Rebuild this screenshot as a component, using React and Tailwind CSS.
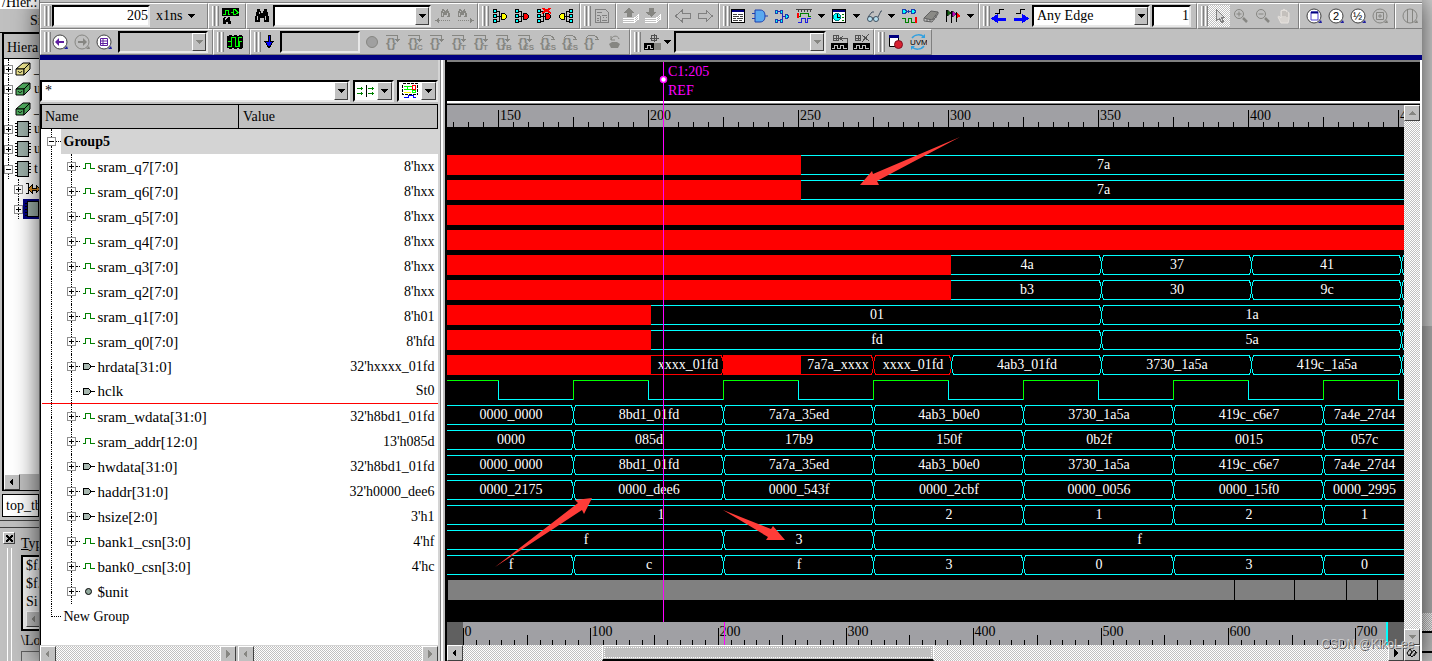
import React from "react";

const RAISED = "bg-[#c0c0c0] border border-t-white border-l-white border-r-[#404040] border-b-[#404040]";
const SUNKEN = "border-2 border-t-black border-l-black border-r-[#e8e8e8] border-b-[#e8e8e8]";
const CHECKER = "bg-[conic-gradient(#fff_25%,#c0c0c0_0_50%,#fff_0_75%,#c0c0c0_0)] bg-[length:2px_2px]";

const CYAN = "#00ffff";
const RED = "#ff0000";

// visible part of the simulation, in ns, and the zoom of the wave view
const T_START = 133;
const T_END = 452;
const PX_PER_NS = 3;
const toX = (t) => (t - T_START) * PX_PER_NS;

// [from, to, label, kind]
const clocked = (labels) =>
  labels.map((label, i) => [i === 0 ? 100 : 125 + i * 50, 175 + i * 50, label]);

const qBus = (unknownUntil, parts) => [[100, unknownUntil, "", "x"], ...parts];

const signals = [
  { name: "sram_q7[7:0]", value: "8'hxx", icon: "net", bus: qBus(251, [[251, 500, "7a", "open"]]) },
  { name: "sram_q6[7:0]", value: "8'hxx", icon: "net", bus: qBus(251, [[251, 500, "7a", "open"]]) },
  { name: "sram_q5[7:0]", value: "8'hxx", icon: "net", bus: qBus(500, []) },
  { name: "sram_q4[7:0]", value: "8'hxx", icon: "net", bus: qBus(500, []) },
  { name: "sram_q3[7:0]", value: "8'hxx", icon: "net", bus: qBus(301, [[301, 351, "4a", "open"], [351, 401, "37"], [401, 451, "41"], [451, 500, ""]]) },
  { name: "sram_q2[7:0]", value: "8'hxx", icon: "net", bus: qBus(301, [[301, 351, "b3", "open"], [351, 401, "30"], [401, 451, "9c"], [451, 500, ""]]) },
  { name: "sram_q1[7:0]", value: "8'h01", icon: "net", bus: qBus(201, [[201, 351, "01", "open"], [351, 451, "1a"], [451, 500, ""]]) },
  { name: "sram_q0[7:0]", value: "8'hfd", icon: "net", bus: qBus(201, [[201, 351, "fd", "open"], [351, 451, "5a"], [451, 500, ""]]) },
  {
    name: "hrdata[31:0]",
    value: "32'hxxxx_01fd",
    icon: "port",
    bus: [
      [100, 201, "", "x"],
      [201, 225, "xxxx_01fd", "partial-open"],
      [225, 251, "", "x"],
      [251, 275, "7a7a_xxxx", "partial-open"],
      [275, 301, "xxxx_01fd", "partial"],
      [301, 351, "4ab3_01fd"],
      [351, 401, "3730_1a5a"],
      [401, 451, "419c_1a5a"],
      [451, 500, ""],
    ],
  },
  { name: "hclk", value: "St0", icon: "port", clock: true },
  { name: "sram_wdata[31:0]", value: "32'h8bd1_01fd", icon: "net", bus: clocked(["0000_0000", "8bd1_01fd", "7a7a_35ed", "4ab3_b0e0", "3730_1a5a", "419c_c6e7", "7a4e_27d4"]) },
  { name: "sram_addr[12:0]", value: "13'h085d", icon: "net", bus: clocked(["0000", "085d", "17b9", "150f", "0b2f", "0015", "057c"]) },
  { name: "hwdata[31:0]", value: "32'h8bd1_01fd", icon: "port", bus: clocked(["0000_0000", "8bd1_01fd", "7a7a_35ed", "4ab3_b0e0", "3730_1a5a", "419c_c6e7", "7a4e_27d4"]) },
  { name: "haddr[31:0]", value: "32'h0000_dee6", icon: "port", bus: clocked(["0000_2175", "0000_dee6", "0000_543f", "0000_2cbf", "0000_0056", "0000_15f0", "0000_2995"]) },
  { name: "hsize[2:0]", value: "3'h1", icon: "port", bus: [[100, 275, "1"], [275, 325, "2"], [325, 375, "1"], [375, 425, "2"], [425, 500, "1"]] },
  { name: "bank1_csn[3:0]", value: "4'hf", icon: "net", bus: [[100, 225, "f"], [225, 275, "3"], [275, 500, "f"]] },
  { name: "bank0_csn[3:0]", value: "4'hc", icon: "net", bus: clocked(["f", "c", "f", "3", "0", "3", "0"]) },
  { name: "$unit", value: "", icon: "unit", unit: true },
];

/* ---------- icons ---------- */

function Svg({ w = 16, h = 16, children, smooth }) {
  return (
    <svg width={w} height={h} viewBox={`0 0 ${w} ${h}`} shapeRendering={smooth ? "auto" : "crispEdges"} className="shrink-0" aria-hidden="true">
      {children}
    </svg>
  );
}

const Down = ({ color = "#000" }) => (
  <Svg w={7} h={4}><path d="M0 0h7L3.5 4z" fill={color} /></Svg>
);

const Binoculars = ({ color = "#000", s = 1 }) => (
  <g fill={color} transform={`scale(${s})`}>
    <path d="M3 1h3v2h1v2h2V3h1V1h3v3h1v4h1v6h-5v-4H6v4H1V8h1V4h1z" />
    <path d="M3 8h1v4H3zM11 8h1v4h-1zM5 4h1v2H5z" fill="#c0c0c0" />
  </g>
);

const FindNext = ({ right }) => (
  <Svg w={17} h={16}>
    <g transform={right ? "translate(0 0)" : "translate(5 0)"}><Binoculars color="#868682" s={0.65} /></g>
    <path d={right ? "M13 10v5l4-2.500z" : "M4 10v5l-4-2.500z"} fill="#868682" />
    <path d={right ? "M1 12.500h12" : "M4 12.500h12"} stroke="#868682" strokeDasharray="1 1" />
  </Svg>
);

const FindWave = () => (
  <Svg w={17} h={17}>
    <path d="M0 0h17v8H0z" fill="#000" />
    <path d="M1 6.500h2v-4h3v4h2M9 4.500h2M11 1.500h2l2 2v2l-2 1h-2zM15 4.500h2" stroke="#00ff00" fill="none" />
    <g transform="translate(0 8)"><Binoculars s={0.6} /></g>
  </Svg>
);

const Tracer = ({ gate, flip, crossed }) => (
  <Svg>
    <g transform={flip ? "translate(16 0) scale(-1 1)" : ""}>
      <path d="M1.500 1.500h3v3h-3zM1.500 6.500h3v3h-3zM1.500 11.500h3v3h-3z" fill={CYAN} stroke="#000" />
      <path d="M2 2h2v2h-2zM2 7h2v2h-2zM2 12h2v2h-2z" fill={CYAN} />
      <path d="M5 3.500h2.500v10H5M5 8.500h6" stroke="#000" fill="none" />
      <path d="M9.500 5.500h3l2 2v2l-2 2h-3z" fill={gate} stroke="#000" />
    </g>
    {crossed && <path d="M6 0l9 5M15 0L6 5" stroke={RED} strokeWidth="2" />}
  </Svg>
);

const Doc = () => (
  <Svg>
    <path d="M1.500 1.500h10l3 3v10h-13z" fill="none" stroke="#808080" />
    <path d="M3 4.500h5M3 7.500h3M8 7.500h5M3 10.500h2M3 12.500h2M9 9.500h1M12 9.500h1M8 12.500h5M6.500 8v6" stroke="#808080" />
  </Svg>
);

const Stack = ({ up }) => (
  <Svg w={18}>
    <path d={up ? "M7 0l6 5h-3v4H5V5H1z" : "M5 0h5v4h3L7.500 9 1 4h4z"} fill="#868682" />
    <path d="M1 10.500h11l5-4M1 12.500h11l5-4M1 14.500h11l5-4" stroke="#fff" fill="none" />
  </Svg>
);

const HollowArrow = ({ left }) => (
  <Svg>
    <path transform={left ? "" : "translate(16 0) scale(-1 1)"} d="M.5 8L7 2.500v3h8v5H7v3z" fill="none" stroke="#808080" />
  </Svg>
);

const ListWindow = () => (
  <Svg>
    <path d="M1.500 1.500h13v13h-13z" fill="#fff" stroke="#000" />
    <path d="M2 2h12v2H2z" fill="#000080" />
    <path d="M3 6.500h4M8 6.500h5M3 8.500h6M10 8.500h3M3 10.500h3M7 10.500h6M3 12.500h5M9 12.500h3" stroke="#404040" />
  </Svg>
);

const Gate = () => (
  <Svg smooth>
    <path d="M3 2h5c4 0 5 3 5 6s-1 6-5 6H3z" fill="#5aa9f0" stroke="#1b3fae" />
    <path d="M0 5.500h3M0 10.500h3M13 8h3" stroke="#1b3fae" />
  </Svg>
);

const Nets = () => (
  <Svg>
    <path d="M3 3.500h5M3 12.500h5M8.500 3v10M8 8.500h3" stroke="#2020c0" fill="none" />
    <path d="M1.500 2.500h2v3h-2zM1.500 11.500h2v3h-2zM6.500 2h2v3h-2zM6.500 11h2v3h-2zM11.500 6.500h2l1 2-1 2h-2z" fill={CYAN} stroke="#1b3fae" />
  </Svg>
);

const WaveRuler = () => (
  <Svg>
    <path d="M0 1.500h16M2.500 1v3M5.500 1v3M8.500 1v3M11.500 1v3M14.500 1v3" stroke="#404040" />
    <path d="M2 8.500h2v-3h8v3h3" stroke="#008000" fill="none" />
    <path d="M2 14.500h3v-4h4v4h2v-4h4" stroke="#2020e0" fill="none" />
    <path d="M1 5h2v5H1z" fill={RED} />
  </Svg>
);

const ClockWindow = () => (
  <Svg>
    <path d="M1.500 1.500h13v13h-13z" fill="#fff" stroke="#000" />
    <path d="M2 2h12v2H2z" fill="#000080" />
    <circle cx="6" cy="9" r="3.500" fill={CYAN} stroke="#008080" />
    <path d="M6.500 6v3.500H9" stroke="#000" fill="none" />
    <path d="M11 6.500h2M11 9.500h2M11 12.500h2" stroke="#008000" />
  </Svg>
);

const Glasses = () => (
  <Svg smooth>
    <circle cx="4" cy="11" r="2.500" fill="#b8e0f0" stroke="#405060" />
    <circle cx="10" cy="11" r="2.500" fill="#b8e0f0" stroke="#405060" />
    <path d="M2 9l4-5h2M12 9l3-6h1M6 10h2" stroke="#405060" fill="none" />
  </Svg>
);

const GateWave = () => (
  <Svg>
    <path d="M1.500 1.500h3l1 2-1 2h-3zM10.500 1.500h3l1 2-1 2h-3z" fill={CYAN} stroke="#1b3fae" />
    <path d="M6 3.500h4M7.500 2v3" stroke="#1b3fae" />
    <path d="M1 10.500h3v4h3v-4h3v4h4" stroke="#008000" fill="none" />
    <path d="M14 9h2v6h-2z" fill={RED} />
  </Svg>
);

const GreyChip = () => (
  <Svg smooth>
    <path d="M1 10l7-7 7 1-6 8z" fill="#8a8a86" stroke="#606060" />
    <path d="M1 10v3l8 1 6-8V4M4 11v3M7 11v3M11 10v2M13 7v3" stroke="#606060" fill="none" />
  </Svg>
);

const Flags = () => (
  <Svg>
    <path d="M1.500 2v12M6.500 3v12M11.500 4v10" stroke="#000" />
    <path d="M2 2l5 3-5 3z" fill="#106010" stroke="#000" strokeWidth=".5" />
    <path d="M7 3l5 3-5 3z" fill="#c000c0" stroke="#000" strokeWidth=".5" />
    <path d="M12 5l4 3-4 2z" fill={RED} />
  </Svg>
);

const EdgeArrow = ({ left }) => (
  <Svg>
    <path d={left ? "M4 5.500h4v-4h5" : "M3 5.500h4v-4h5"} stroke="#000" fill="none" />
    <path transform={left ? "" : "translate(16 0) scale(-1 1)"} d="M0 10.500l7-5v4h8v3H7v3z" fill="#0000ff" />
  </Svg>
);

const Pointer = () => (
  <Svg><path d="M5.500 1.500v11l3-2 2 4 2-1-2-4h3z" fill="#d8d8d8" stroke="#808080" /></Svg>
);

const Magnifier = ({ plus }) => (
  <Svg smooth>
    <circle cx="6" cy="6" r="4.500" fill="none" stroke="#868682" />
    <path d={plus ? "M3.500 6h5M6 3.500v5" : "M3.500 6h5"} stroke="#868682" />
    <path d="M10 10l4 4" stroke="#868682" strokeWidth="2.500" />
  </Svg>
);

const Hand = () => (
  <Svg smooth>
    <path d="M4 15L1 9c0-1 1-1 2 0l1 1V3c0-1 2-1 2 0V2c0-1 2-1 2 0v1c0-1 2-1 2 0v2c0-1 2-1 2 0v6l-1 4z" fill="#d8d4d0" stroke="#e6e2de" />
    <path d="M6 3v5M8 3v5M10 4v5" stroke="#b0aca8" />
  </Svg>
);

function Lens({ children, off }) {
  return (
    <Svg w={17} smooth>
      <circle cx="8" cy="8" r="7" fill={off ? "#c0c0c0" : "#fff"} stroke={off ? "#868682" : "#404040"} />
      <path d="M12 15l4 0-1-3z" fill={off ? "#868682" : "#2020a0"} />
      {children}
    </Svg>
  );
}

const Brackets = ({ tag = "", loop }) => (
  <Svg w={18}>
    {loop ? (
      <path d="M3 4c3-4 9-4 11 0v2M12 5h4M14.500 3v3" stroke="#868682" fill="none" />
    ) : (
      <path d="M1 1.500h11v6M10 5.500h5M11 6.500h3" stroke="#868682" fill="none" />
    )}
    <text x="1" y="13" fontSize="13" fontWeight="bold" fill="#868682" className="font-['Liberation_Sans']">{"{}"}</text>
    {tag && <text x={tag.length > 1 ? 6 : 10} y="16" fontSize="8" fontWeight="bold" fill="#868682" className="font-['Liberation_Sans']">{tag}</text>}
  </Svg>
);

const ScopeWave = ({ kind }) => (
  <Svg w={17} h={17}>
    <path d="M0 9h17v7H0z" fill={kind === "pick" ? "#868682" : "#000"} />
    {kind === "pick" && <path d="M0 9h10v7H0z" fill="#000" />}
    <path d={kind === "pick" ? "M1 14.500h2v-3h3v3h3" : "M1 14.500h2v-3h3v3h3v-3h3v3h4"} stroke="#c0c0c0" fill="none" />
    <circle cx={kind === "pick" ? 10 : 5} cy="4" r="3" fill="none" stroke="#505050" />
    <path d={kind === "pick" ? "M10.500 0v8M6 4.500h9" : "M5.500 1v6M2 4.500h6"} stroke="#505050" />
    {kind === "back" && <path d="M9 4.500h7v4M12 2l-3 2.500 3 2.500" stroke="#505050" fill="none" />}
    {kind === "cut" && <path d="M9 1l7 6M16 0L9 8" stroke="#505050" />}
  </Svg>
);

const GreenWaves = () => (
  <Svg>
    <path d="M0 1h16v14H0z" fill="#000" />
    <path d="M1 7.500h3v-4h4v9h3v-9h4M1 12.500h3v-5M11 7.500h4M12.500 8v5" stroke="#00ff00" fill="none" />
    <path d="M0 1.500h16M0 14.500h16" stroke="#c0c0c0" strokeDasharray="2 3" />
  </Svg>
);

const RecordWindow = () => (
  <Svg smooth>
    <path d="M1.500 1.500h9v11h-9z" fill="#fff" stroke="#000" />
    <path d="M1 1h10v3H1z" fill="#000080" />
    <circle cx="10.500" cy="10.500" r="4" fill="#d82030" stroke="#801020" />
  </Svg>
);

const Uvm = () => (
  <Svg w={18} smooth>
    <path d="M3 4c3-4 9-4 12-1M15 12c-3 4-9 4-12 1" stroke="#30a0e0" fill="none" strokeWidth="1.500" />
    <path d="M16 0v4h-4zM2 16v-4h4z" fill="#30a0e0" />
    <text x="1" y="11" fontSize="8" fill="#000" className="font-['Liberation_Sans']">UVM</text>
  </Svg>
);

function SignalIcon({ kind }) {
  if (kind === "net") {
    return <Svg w={12} h={9}><path d="M0 6.500h2.500v-5h5v5h4.500" stroke="#008000" fill="none" /></Svg>;
  }
  if (kind === "port") {
    return <Svg w={12} h={9}><path d="M.5 1.500h5l2 2v2l-2 2h-5z" fill="#a8b8b0" stroke="#000" /><path d="M8 4.500h4" stroke="#000" /></Svg>;
  }
  return <Svg w={12} h={9} smooth><circle cx="5.500" cy="4.500" r="3" fill="#90a89c" stroke="#000" /></Svg>;
}

const CubeIcon = ({ color }) => (
  <Svg smooth>
    <path d="M1 8l7-6h7l-6 6z" fill={color} stroke="#000" />
    <path d="M1 8h8v6H1z" fill={color} stroke="#000" />
    <path d="M9 8l6-6v6l-6 6z" fill={color} stroke="#000" />
    <path d="M3 10c1 2 3 2 4 0" stroke="#000" fill="none" />
  </Svg>
);

const ChipIcon = () => (
  <Svg>
    <path d="M2.500.5h11v15h-11z" fill="#9cafa8" stroke="#000" />
    <path d="M0 2.500h2M0 5.500h2M0 8.500h2M0 11.500h2M0 14.500h2M14 2.500h2M14 5.500h2M14 8.500h2M14 11.500h2" stroke="#000" />
  </Svg>
);

/* ---------- small controls ---------- */

function ToolButton({ label, children, pressed, narrow }) {
  return (
    <button
      type="button"
      aria-label={label}
      className={`flex h-[22px] shrink-0 items-center justify-center ${narrow ? "w-[13px]" : "w-[22px]"} ${pressed ? CHECKER : ""}`}
    >
      {children}
    </button>
  );
}

const Grip = () => (
  <div className="ml-[3px] flex h-[20px] shrink-0 gap-px">
    <div className="w-[3px] border-r border-l border-r-[#808080] border-l-white" />
    <div className="w-[3px] border-r border-l border-r-[#808080] border-l-white" />
  </div>
);

const Group = ({ width, children }) => (
  <div className={`flex h-[26px] shrink-0 items-center overflow-hidden border-t border-r border-b border-l border-t-white border-r-[#808080] border-b-[#808080] border-l-white ${width}`}>
    {children}
  </div>
);

function Combo({ label, width, value = "", disabled }) {
  return (
    <div className={`flex h-[22px] shrink-0 ${SUNKEN} ${width} ${disabled ? "bg-[#c0c0c0]" : "bg-white"}`}>
      <input aria-label={label} defaultValue={value} disabled={disabled} className="min-w-0 flex-1 bg-transparent px-1 text-sm outline-none" />
      <button type="button" aria-label={`${label} list`} className={`flex w-[14px] shrink-0 items-center justify-center ${RAISED}`}>
        <Down color={disabled ? "#868682" : "#000"} />
      </button>
    </div>
  );
}

function ScrollButton({ label, dir, off }) {
  const paths = { left: "M5 0v8L1 4z", right: "M2 0v8l4-4z", up: "M0 6h8L4 2z", down: "M0 2h8L4 6z" };
  return (
    <button type="button" aria-label={label} className={`flex size-[16px] shrink-0 items-center justify-center ${RAISED}`}>
      <Svg w={8} h={8}><path d={paths[dir]} fill={off ? "#868682" : "#000"} /></Svg>
    </button>
  );
}

/* ---------- toolbars ---------- */

function Toolbars() {
  return (
    <header className="shrink-0 overflow-hidden">
      <div className="h-[3px] border-b border-[#808080]" />
      <div className="flex">
        <Group width="w-[168px]">
          <Grip />
          <input aria-label="Time" defaultValue="205" className={`ml-px h-[22px] w-[98px] bg-white text-right text-sm outline-none ${SUNKEN}`} />
          <button type="button" className="ml-[6px] flex items-center gap-[6px] text-sm">x1ns <Down /></button>
        </Group>
        <Group width="w-[38px]">
          <Grip />
          <ToolButton label="Find signal"><FindWave /></ToolButton>
        </Group>
        <Group width="w-[232px]">
          <div className="ml-[4px]"><ToolButton label="Find"><Svg><Binoculars /></Svg></ToolButton></div>
          <Combo label="Search text" width="w-[158px]" />
          <div className="ml-px flex">
            <ToolButton label="Find previous"><FindNext /></ToolButton>
            <ToolButton label="Find next"><FindNext right /></ToolButton>
          </div>
        </Group>
        <Group width="w-[102px]">
          <Grip />
          <ToolButton label="Trace drivers"><Tracer gate="#ffff00" /></ToolButton>
          <ToolButton label="Trace active driver"><Tracer gate={RED} /></ToolButton>
          <ToolButton label="Trace X"><Tracer gate={RED} crossed /></ToolButton>
          <ToolButton label="Trace loads"><Tracer gate="#ffff00" flip /></ToolButton>
        </Group>
        <Group width="w-[36px]">
          <Grip />
          <ToolButton label="Source"><Doc /></ToolButton>
        </Group>
        <Group width="w-[52px]">
          <div className="ml-[3px] flex">
            <ToolButton label="Scope up"><Stack up /></ToolButton>
            <ToolButton label="Scope down"><Stack /></ToolButton>
          </div>
        </Group>
        <Group width="w-[51px]">
          <div className="ml-[3px] flex">
            <ToolButton label="Back"><HollowArrow left /></ToolButton>
            <ToolButton label="Forward"><HollowArrow /></ToolButton>
          </div>
        </Group>
        <Group width="w-[260px]">
          <Grip />
          <div className="-ml-[3px] flex">
            <ToolButton label="Source view"><ListWindow /></ToolButton>
            <ToolButton label="Schematic view"><Gate /></ToolButton>
            <ToolButton label="Path schematic"><Nets /></ToolButton>
            <ToolButton label="Wave view"><WaveRuler /></ToolButton>
            <ToolButton label="Wave view menu" narrow><Down /></ToolButton>
            <ToolButton label="List view"><ClockWindow /></ToolButton>
            <ToolButton label="List view menu" narrow><Down /></ToolButton>
            <ToolButton label="Watch"><Glasses /></ToolButton>
            <ToolButton label="Watch menu" narrow><Down /></ToolButton>
            <ToolButton label="Annotate"><GateWave /></ToolButton>
            <ToolButton label="Memory"><GreyChip /></ToolButton>
            <ToolButton label="Markers"><Flags /></ToolButton>
            <ToolButton label="Markers menu" narrow><Down /></ToolButton>
          </div>
        </Group>
        <Group width="w-[218px]">
          <Grip />
          <div className="-ml-[2px] flex">
            <ToolButton label="Previous edge"><EdgeArrow left /></ToolButton>
            <ToolButton label="Next edge"><EdgeArrow /></ToolButton>
          </div>
          <div className={`flex h-[22px] w-[118px] shrink-0 bg-white ${SUNKEN}`}>
            <select aria-label="Edge type" className="min-w-0 flex-1 appearance-none bg-white pl-[3px] text-sm leading-none outline-none">
              <option>Any Edge</option>
            </select>
            <div className={`flex w-[14px] items-center justify-center ${RAISED}`}><Down /></div>
          </div>
          <input aria-label="Edge count" defaultValue="1" className={`ml-[2px] h-[22px] w-[39px] bg-white text-right text-sm outline-none ${SUNKEN}`} />
        </Group>
        <Group width="w-[102px]">
          <Grip />
          <ToolButton label="Select" pressed><Pointer /></ToolButton>
          <ToolButton label="Zoom in"><Magnifier plus /></ToolButton>
          <ToolButton label="Zoom out"><Magnifier /></ToolButton>
          <ToolButton label="Pan"><Hand /></ToolButton>
        </Group>
        <Group width="w-[96px]">
          <div className="ml-[3px] flex">
            <ToolButton label="Zoom full"><Lens><path d="M5 4h7v8H5z" fill="#fff" stroke="#5040d0" /><path d="M5 4.500h7" stroke="#000080" strokeWidth="2" /></Lens></ToolButton>
            <ToolButton label="Zoom 2x"><Lens><text x="5" y="12" fontSize="11" className="font-['Liberation_Sans']">2</text></Lens></ToolButton>
            <ToolButton label="Zoom half"><Lens><text x="3" y="12" fontSize="11" className="font-['Liberation_Sans']">½</text></Lens></ToolButton>
            <ToolButton label="Zoom to selection"><Lens off><path d="M4.500 4.500h7v7h-7zM7 7h2v2H7z" fill="none" stroke="#868682" /></Lens></ToolButton>
          </div>
        </Group>
        <Group width="w-[28px]">
          <div className="ml-[3px]"><ToolButton label="Zoom cursors"><Lens off><path d="M5.500 1v14M10.500 1v14" stroke="#868682" /></Lens></ToolButton></div>
        </Group>
      </div>
      <div className="flex">
        <Group width="w-[173px]">
          <Grip />
          <div className="-ml-[2px] flex">
            <ToolButton label="Previous view"><Lens><path d="M3 8l4-4v3h5v2H7v3z" fill="#6020a0" /></Lens></ToolButton>
            <ToolButton label="Next view"><Lens off><path d="M13 8L9 4v3H4v2h5v3z" fill="#868682" /></Lens></ToolButton>
            <ToolButton label="View list"><Lens><path d="M4.500 4.500h7v7h-7zM4 7h8M4 9.500h8M7 4v8" fill="none" stroke="#6020a0" /></Lens></ToolButton>
          </div>
          <div className="ml-[3px]"><Combo label="View" width="w-[90px]" disabled /></div>
        </Group>
        <Group width="w-[37px]">
          <Grip />
          <ToolButton label="Waves"><GreenWaves /></ToolButton>
        </Group>
        <Group width="w-[380px]">
          <Grip />
          <div className="-ml-[3px]">
            <ToolButton label="Step to"><Svg w={10}><path d="M4 1h2v6h3.500L5 14 .5 7H4z" fill="#0000ff" stroke="#000" /></Svg></ToolButton>
          </div>
          <input aria-label="Run time" disabled className={`mr-px h-[22px] w-[80px] bg-[#c0c0c0] ${SUNKEN}`} />
          <ToolButton label="Stop"><Svg smooth><circle cx="8" cy="8" r="5.500" fill="#a0a0a0" stroke="#868682" /></Svg></ToolButton>
          <ToolButton label="Step"><Brackets /></ToolButton>
          <ToolButton label="Step C"><Brackets tag="C" /></ToolButton>
          <ToolButton label="Next"><Brackets /></ToolButton>
          <ToolButton label="Step thread"><Brackets tag="T" /></ToolButton>
          <ToolButton label="Next thread"><Brackets tag="T" /></ToolButton>
          <ToolButton label="Step testbench"><Brackets tag="TB" /></ToolButton>
          <ToolButton label="Constraint step"><Brackets tag="CS" /></ToolButton>
          <ToolButton label="Constraint loop"><Brackets loop tag="CS" /></ToolButton>
          <ToolButton label="Constraint rerun"><Brackets loop tag="CS" /></ToolButton>
          <ToolButton label="Step out"><Brackets loop /></ToolButton>
          <ToolButton label="Reset"><Svg smooth><path d="M3 10l3-2h5l3 2-2 4H5z" fill="#868682" /><path d="M5 6c1-5 7-5 8-1M5 2v4h4" stroke="#868682" fill="none" /></Svg></ToolButton>
        </Group>
        <Group width="w-[244px]">
          <Grip />
          <ToolButton label="Pick scope"><ScopeWave kind="pick" /></ToolButton>
          <div className="-ml-[2px]"><ToolButton label="Pick scope menu" narrow><Down /></ToolButton></div>
          <Combo label="Scope" width="w-[152px]" disabled />
          <div className="ml-[2px] flex">
            <ToolButton label="Restore scope"><ScopeWave kind="back" /></ToolButton>
            <ToolButton label="Delete scope"><ScopeWave kind="cut" /></ToolButton>
          </div>
        </Group>
        <Group width="w-[58px]">
          <Grip />
          <ToolButton label="Record"><RecordWindow /></ToolButton>
          <ToolButton label="UVM"><Uvm /></ToolButton>
        </Group>
      </div>
      <div className="h-[5px] bg-[#000080]" />
    </header>
  );
}

/* ---------- signal list ---------- */

const Expander = ({ open, label }) => (
  <button type="button" aria-label={label} className="flex size-[9px] shrink-0 items-center justify-center border border-[#909090] bg-white">
    <Svg w={5} h={5}><path d={open ? "M0 2.500h5" : "M0 2.500h5M2.500 0v5"} stroke="#000" /></Svg>
  </button>
);

const Guide = ({ children }) => (
  <div className="flex h-full w-[9px] shrink-0 flex-col items-center">
    <div className="w-0 flex-1 border-l border-dotted border-black" />
    {children}
    <div className="w-0 flex-1 border-l border-dotted border-black" />
  </div>
);

function SignalPane() {
  return (
    <section className="flex w-[398px] shrink-0 flex-col">
      <div className="h-[20px] shrink-0" />
      <div className="flex h-[24px] shrink-0 items-start gap-[3px]">
        <div className={`flex h-[22px] flex-1 bg-white ${SUNKEN}`}>
          <input aria-label="Signal filter" defaultValue="*" className="min-w-0 flex-1 px-[3px] text-sm outline-none" />
          <button type="button" aria-label="Filter history" className={`flex w-[14px] items-center justify-center ${RAISED}`}><Down /></button>
        </div>
        <button type="button" aria-label="Direction" className={`flex h-[22px] w-[41px] items-stretch bg-white ${SUNKEN}`}>
          <span className="flex flex-1 items-center justify-center">
            <Svg w={18} h={12}><path d="M0 3.500h6M0 8.500h6M11 3.500h6M11 8.500h6M4.500 2v3M4.500 7v3M15.500 2v3M15.500 7v3" stroke="#008000" fill="none" /><path d="M9.500 0v12" stroke="#000" /></Svg>
          </span>
          <span className={`flex w-[15px] items-center justify-center ${RAISED}`}><Down /></span>
        </button>
        <button type="button" aria-label="Signal type" className={`flex h-[22px] w-[41px] items-stretch bg-white ${SUNKEN}`}>
          <span className="flex flex-1 items-center justify-center">
            <Svg w={16} h={16}><path d="M.5.5h15v11H.5z" fill="none" stroke="#000" strokeDasharray="3 1" /><path d="M2 3.500h8M2 6.500h8M5.500 3v4" stroke="#00ff00" /><path d="M10.500 2.500h3v4h-3z" fill="none" stroke={RED} /><path d="M10.500 7.500h3v2h-3z" fill="none" stroke="#00ff00" /><path d="M2 9.500h7" stroke="#ffff00" /><path d="M2 14.500h4v-2h5v2h3" stroke="#0000ff" fill="none" /></Svg>
          </span>
          <span className={`flex w-[15px] items-center justify-center ${RAISED}`}><Down /></span>
        </button>
      </div>
      <div className="flex-1 overflow-hidden border-l border-black bg-white">
        <table className="w-full table-fixed border-collapse">
          <thead>
            <tr className="h-[24px] bg-[#c0c0c0] text-left text-sm">
              <th className="w-[197px] border border-black p-0 pl-[3px] font-normal">Name</th>
              <th className="border border-black p-0 pl-[4px] font-normal">Value</th>
            </tr>
          </thead>
          <tbody>
            <tr>
              <td colSpan={2} className="p-0">
                <div className="flex h-[25px] items-center">
                  <div className="ml-[5px] h-full"><Guide><Expander open label="Collapse Group5" /></Guide></div>
                  <div className="w-[5px] border-t border-dotted border-black" />
                  <span className="flex h-full flex-1 items-center bg-[#d4d4d4] pl-[3px] text-sm font-bold">Group5</span>
                </div>
              </td>
            </tr>
            {signals.map((s) => (
              <tr key={s.name} className={s.clock ? "border-b border-[#ff0000]" : ""}>
                <td className="p-0">
                  <div className={`flex items-center ${s.clock ? "h-[24px]" : "h-[25px]"}`}>
                    <div className="ml-[5px] h-full"><Guide /></div>
                    <div className="ml-[11px] h-full">
                      <Guide>{!s.clock && <Expander label={`Expand ${s.name}`} />}</Guide>
                    </div>
                    <div className="mr-[3px] w-[4px] border-t border-dotted border-black" />
                    <SignalIcon kind={s.icon} />
                    <span className="ml-[3px] text-[15px] leading-5 whitespace-nowrap">{s.name}</span>
                  </div>
                </td>
                <td className="p-0 pr-[3px] text-right text-sm">{s.value}</td>
              </tr>
            ))}
            <tr>
              <td colSpan={2} className="p-0">
                <div className="flex h-[25px] items-center">
                  <div className="ml-[9px] h-[13px] w-[10px] self-start border-b border-l border-dotted border-black" />
                  <span className="ml-[3px] text-sm">New Group</span>
                </div>
              </td>
            </tr>
          </tbody>
        </table>
      </div>
      <div className="flex h-[16px] shrink-0 gap-[2px] border-t border-[#d4d4d4]">
        <div className="flex w-[196px]">
          <ScrollButton label="Scroll names left" dir="left" off />
          <div className={`flex-1 ${CHECKER}`} />
          <ScrollButton label="Scroll names right" dir="right" off />
        </div>
        <div className="flex flex-1">
          <ScrollButton label="Scroll values left" dir="left" off />
          <div className={`flex-1 ${CHECKER}`} />
          <ScrollButton label="Scroll values right" dir="right" off />
        </div>
      </div>
    </section>
  );
}

/* ---------- waves ---------- */

function BusSegment({ from, to, label, kind = "" }) {
  const x0 = toX(from);
  const x1 = toX(to);
  if (kind === "x") return <rect x={x0} y="1" width={x1 - x0} height="20" fill={RED} />;
  const open = kind.endsWith("open");
  const middle = (Math.max(x0, 0) + Math.min(x1, toX(T_END))) / 2;
  const start = open ? `M${x0} 1.500` : `M${x0} 11L${x0 + 2.5} 1.500`;
  const end = open ? `H${x0}` : `H${x0 + 2.5}L${x0} 11`;
  return (
    <>
      <path
        d={`${start}H${x1 - 1.5}L${x1 + 1} 11L${x1 - 1.5} 20.500${end}`}
        fill="none"
        stroke={kind.startsWith("partial") ? RED : CYAN}
        shapeRendering="crispEdges"
      />
      <text x={middle + 1} y="15" textAnchor="middle" fontSize="14" fill="#fff">{label}</text>
    </>
  );
}

function ClockWave() {
  const edges = [125, 175, 225, 275, 325, 375, 425];
  return (
    <g fill="none" shapeRendering="crispEdges">
      {edges.map((t) => {
        const x = toX(t) + 0.5;
        return (
          <g key={t}>
            <path d={`M${x + 75} 1V20.500H${x + 150}`} stroke={CYAN} />
            <path d={`M${x} 20.500V1.500H${x + 75}`} stroke="#00ff00" />
          </g>
        );
      })}
    </g>
  );
}

function Waves() {
  return (
    <svg width="100%" height={signals.length * 25} className="block shrink-0" role="img" aria-label="Waveforms">
      {signals.map((s, i) => (
        <g key={s.name} transform={`translate(0 ${i * 25})`}>
          {s.clock && <ClockWave />}
          {s.bus && s.bus.map(([from, to, label, kind]) => <BusSegment key={from} from={from} to={to} label={label} kind={kind} />)}
          {s.unit && (
            <>
              <rect x="1" y="1" width="100%" height="20" fill="#808080" />
              <path d="M787.500 1v20M847.500 1v20M899.500 1v20M930.500 1v20" stroke="#000" shapeRendering="crispEdges" />
            </>
          )}
        </g>
      ))}
    </svg>
  );
}

function TimeRuler() {
  const ticks = [];
  for (let t = 135; t <= 600; t += 5) ticks.push(t);
  return (
    <svg width="100%" height="22" className="block shrink-0 bg-[#a0a0a4]" shapeRendering="crispEdges">
      {ticks.map((t) => (
        <g key={t}>
          <path d={`M${toX(t) + 0.5} 22V${t % 50 === 0 ? 5 : t % 25 === 0 ? 12 : 17}`} stroke="#000" />
          {t % 50 === 0 && <text x={toX(t) + 2} y="15" fontSize="14">{t}</text>}
        </g>
      ))}
    </svg>
  );
}

function OverviewRuler() {
  const x = (t) => 16.5 + Math.round(t * 1.275);
  const ticks = Array.from({ length: 73 }, (_, i) => i * 10);
  return (
    <svg width="100%" height="23" className="block shrink-0 bg-[#606060]" shapeRendering="crispEdges">
      <rect x="16" width="924" height="23" fill="#a0a0a4" />
      {ticks.map((t) => (
        <g key={t}>
          <path d={`M${x(t)} 23V${t % 100 === 0 ? 6 : t % 50 === 0 ? 13 : 18}`} stroke="#000" />
          {t % 100 === 0 && <text x={x(t) + 1} y="14" fontSize="14">{t}</text>}
        </g>
      ))}
      <path d="M277.500 0v23" stroke="#ff00ff" />
      <path d="M940 0v23" stroke={CYAN} strokeWidth="2" />
    </svg>
  );
}

function Annotations() {
  return (
    <svg width="100%" height="100%" className="pointer-events-none absolute inset-0 z-10">
      <path d="M216.500 2v560" stroke="#ff00ff" shapeRendering="crispEdges" />
      <circle cx="216.500" cy="19.500" r="3" fill="#fff" stroke="#ff00ff" strokeWidth="1.500" />
      <g fill="#ff00ff" fontSize="14">
        <text x="221" y="16">C1:205</text>
        <text x="221" y="35">REF</text>
      </g>
      <g fill="#ff3c38">
        <path d="M513 77L426 114l-1-3-12 14h19l-2-4z" />
        <path d="M48 507L131 443l-3-3 17-2-8 16-2-4z" />
        <path d="M276 450l48 19 2-3 12 14h-19l2-3z" />
      </g>
    </svg>
  );
}

function WavePane() {
  return (
    <section className="relative flex min-w-0 flex-1 flex-col overflow-hidden">
      <div className="h-[41px] shrink-0 border-t-2 border-[#808080] bg-black" />
      <div className="h-[4px] shrink-0 border-t-2 border-b border-t-white border-b-black bg-[#808080]" />
      <div className="flex min-h-0 flex-1">
        <div className="flex min-w-0 flex-1 flex-col bg-black">
          <TimeRuler />
          <div className="h-[27px] shrink-0" />
          <Waves />
          <div className="flex-1" />
          <OverviewRuler />
        </div>
        <div className={`flex w-[16px] shrink-0 flex-col justify-between ${CHECKER}`}>
          <ScrollButton label="Scroll up" dir="up" off />
          <ScrollButton label="Scroll down" dir="down" off />
        </div>
      </div>
      <div className={`flex h-[16px] shrink-0 ${CHECKER}`}>
        <ScrollButton label="Scroll left" dir="left" />
        <div className="w-[139px]" />
        <div className="w-[332px] border border-b-2 border-white border-b-black bg-[#c0c0c0] p-px">
          <div className="h-full border border-dotted border-white" />
        </div>
        <div className="flex-1" />
        <ScrollButton label="Scroll right" dir="right" />
        <button type="button" aria-label="Sync zoom" className={`flex w-[16px] items-center justify-center ${RAISED}`}>
          <Svg w={12} h={10} smooth><path d="M1 5l3-4 2 3-3 4zM4 7l4-5 2 2-4 5zM8 8l3-4" fill="none" stroke="#000" /></Svg>
        </button>
      </div>
      <Annotations />
      <span className="absolute right-[6px] bottom-[9px] z-10 font-['Liberation_Sans'] text-[12px] leading-4 text-[#d8d8d8]/80 [text-shadow:1px_1px_0_#606060]">CSDN @KikoLee</span>
    </section>
  );
}

/* ---------- window lying underneath ---------- */

const scopes = [
  { icon: <CubeIcon color="#f0e890" />, text: "_" },
  { icon: <CubeIcon color="#50b060" />, text: "u" },
  { icon: <CubeIcon color="#50b060" />, text: "_", leaf: true },
  { icon: <ChipIcon />, text: "u" },
  { icon: <ChipIcon />, text: "u" },
  { icon: <ChipIcon />, text: "t", open: true },
];

function BackWindow() {
  return (
    <aside className="flex w-[39px] shrink-0 flex-col overflow-hidden bg-[#c0c0c0] text-sm whitespace-nowrap">
      <div className="flex h-[9px] shrink-0 items-end overflow-hidden bg-white pl-[2px] leading-3">/Hier.:</div>
      <div className="h-[24px] shrink-0 border-b border-black pl-[30px] leading-6">Si</div>
      <div className="ml-[2px] flex h-[458px] shrink-0 flex-col border-t border-b border-l-2 border-black bg-white">
        <div className="h-[25px] shrink-0 border-b border-black bg-[#c0c0c0] pl-[3px] leading-7">Hiera</div>
        {scopes.map((s, i) => (
          <div key={i} className="flex h-[20px] shrink-0 items-center">
            <Guide>{!s.leaf && <Expander open={s.open} label={`Toggle scope ${i + 1}`} />}</Guide>
            <div className="ml-[2px] flex gap-[3px]">{s.icon}<span className="leading-4">{s.text}</span></div>
          </div>
        ))}
        <div className="flex h-[20px] shrink-0 items-center pl-[10px]">
          <Guide><Expander label="Expand ports" /></Guide>
          <Svg w={17} h={14}><path d="M3 1.500h2.500v10H3" stroke="#000" fill="none" /><path d="M5 7l4-4v3h4V3l4 4-4 4V8H9v3z" fill="#e09020" stroke="#000" /></Svg>
        </div>
        <div className="flex h-[20px] shrink-0 items-center pl-[10px]">
          <Guide><Expander label="Expand block" /></Guide>
          <div className="bg-[#000080] p-[2px]"><ChipIcon /></div>
        </div>
        <div className="flex-1" />
        <div className="flex h-[16px] shrink-0 bg-[#c0c0c0]"><ScrollButton label="Scroll scopes" dir="left" /></div>
      </div>
      <div className="mt-[3px] ml-[2px] h-[23px] shrink-0 border border-black bg-white pl-[3px] leading-[22px]">top_tb</div>
      <div className="mt-[3px] h-[8px] shrink-0 border-t border-b border-[#404040]" />
      <div className="flex flex-1 gap-[6px] pt-[4px] pl-[3px]">
        <div className="flex w-[12px] shrink-0 flex-col items-center">
          <button type="button" aria-label="Close panel" className={`flex size-[12px] shrink-0 items-center justify-center ${RAISED}`}>
            <Svg w={7} h={7}><path d="M0 0l7 7M7 0L0 7" stroke="#000" strokeWidth="1.500" /></Svg>
          </button>
          <div className="mt-[4px] w-[5px] flex-1 border-r border-l border-white" />
        </div>
        <div className="flex flex-1 flex-col">
          <div className="h-[23px] leading-6"><u>T</u>yp</div>
          <div className="h-[76px] border-2 border-r-0 border-black bg-[#f4f4f4] pl-[3px] leading-[18px]">
            <div>$f.</div>
            <div>$f.</div>
            <div>Si</div>
            <ScrollButton label="Scroll messages" dir="left" off />
          </div>
          <div className="h-[19px] leading-5">\Lo</div>
          <div className="mt-px flex-1 border-t border-l border-[#606060]" />
        </div>
      </div>
    </aside>
  );
}

export default function App() {
  return (
    <div className="flex h-screen w-full overflow-hidden bg-[#c0c0c0] font-['Liberation_Serif',serif] text-black">
      <BackWindow />
      <main className="relative z-10 flex min-w-0 flex-1 flex-col border-l border-[#606060] bg-[#c0c0c0] shadow-[0_0_24px_rgba(0,0,0,0.7)]">
        <Toolbars />
        <div className="flex min-h-0 flex-1">
          <SignalPane />
          <div className="flex w-[9px] shrink-0">
            <div className="w-[2px] bg-[#d4d4d4]" />
            <div className="w-px bg-[#808080]" />
            <div className="w-[2px] bg-white" />
            <div className="w-[2px] bg-[#c0c0c0]" />
            <div className="w-[2px] bg-black" />
          </div>
          <WavePane />
          <div className="w-[2px] shrink-0 bg-white" />
        </div>
      </main>
      <div className="flex w-[10px] shrink-0 flex-col">
        <div className="h-[326px] bg-[#d0d0d0]" />
        <div className="flex-1 bg-[#b0b0b0]" />
        <div className={`h-[18px] ${CHECKER}`} />
        <div className="h-[30px] border-t-2 border-black bg-[#c0c0c0] pt-[18px]"><div className="border-t-2 border-black" /></div>
      </div>
    </div>
  );
}
